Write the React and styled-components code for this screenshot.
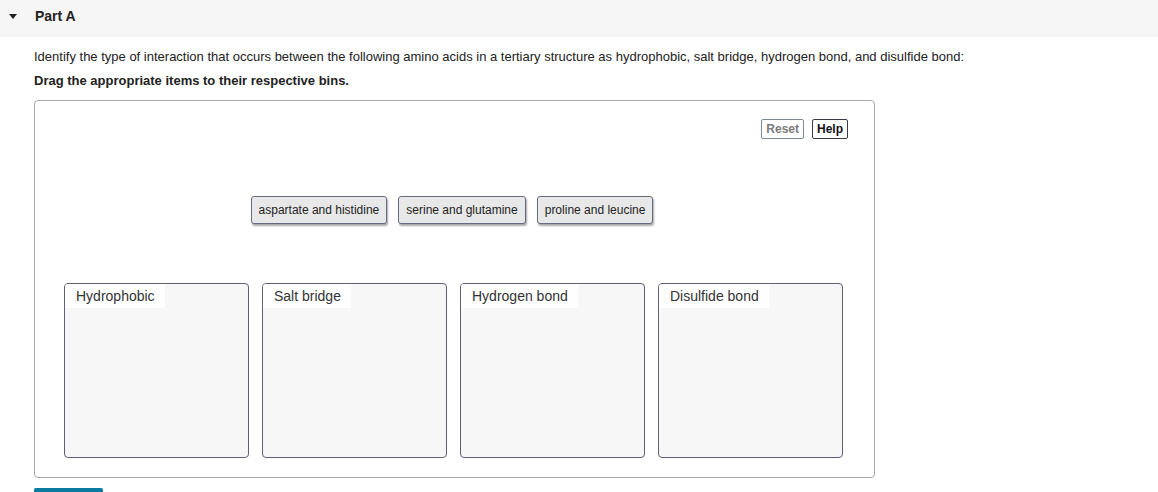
import React from "react";
import styled, { createGlobalStyle } from "styled-components";

const Global = createGlobalStyle`
  body {
    margin: 0;
    background: #fff;
    font-family: "Liberation Sans", Arial, sans-serif;
    color: #222;
  }
`;

const Header = styled.div`
  height: 37px;
  background: #f6f6f6;
  display: flex;
  align-items: center;
  padding-left: 9px;
  gap: 18px;
`;
const Caret = styled.div`
  width: 0;
  height: 0;
  border-left: 4.5px solid transparent;
  border-right: 4.5px solid transparent;
  border-top: 5px solid #222;
  margin-top: -4px;
`;
const PartTitle = styled.div`
  font-size: 14px;
  font-weight: 700;
  color: #222;
  margin-top: -6px;
`;
const Body = styled.div`
  padding: 12px 34px 0;
`;
const Question = styled.p`
  margin: 0;
  font-size: 13px;
  line-height: 16px;
  color: #222;
`;
const Instruction = styled.p`
  margin: 8px 0 0;
  font-size: 13px;
  line-height: 16px;
  font-weight: 700;
  color: #222;
`;
const Board = styled.div`
  margin-top: 11px;
  width: 841px;
  height: 378px;
  box-sizing: border-box;
  border: 1px solid #a9a9a9;
  border-radius: 4px;
  padding: 18px 26px 0 29px;
  display: flex;
  flex-direction: column;
`;
const Tools = styled.div`
  display: flex;
  justify-content: flex-end;
  gap: 8px;
`;
const ToolButton = styled.button`
  font-family: "Liberation Sans", Arial, sans-serif;
  font-size: 12px;
  font-weight: 700;
  height: 20px;
  padding: 0 4px;
  background: #fff;
  border: 1px solid ${(p) => (p.$muted ? "#7d8a90" : "#3a3a4a")};
  border-radius: 2px;
  color: ${(p) => (p.$muted ? "#7b7b7b" : "#111")};
`;
const Tiles = styled.div`
  display: flex;
  justify-content: center;
  gap: 11px;
  margin-top: 57px;
  padding-right: 8px;
`;
const Tile = styled.div`
  height: 28px;
  box-sizing: border-box;
  padding: 0 7px;
  display: flex;
  align-items: center;
  font-size: 12px;
  color: #222;
  background: #e8e8e8;
  border: 1px solid #666a80;
  border-radius: 3px;
  box-shadow: 1px 2px 2px rgba(0, 0, 0, 0.35);
`;
const Bins = styled.div`
  display: flex;
  gap: 13px;
  margin-top: 59px;
`;
const Bin = styled.div`
  width: 185px;
  height: 175px;
  box-sizing: border-box;
  border: 1px solid #5f5f78;
  border-radius: 4px;
  background: #f7f7f7;
`;
const BinLabel = styled.div`
  display: inline-block;
  background: #fff;
  padding: 5px 10px 4px 11px;
  font-size: 14px;
  line-height: 15px;
  color: #333;
  border-top-left-radius: 3px;
`;
const ActionBar = styled.div`
  margin-top: 10px;
  width: 69px;
  height: 6px;
  background: #0a7aa0;
  border-radius: 2px 2px 0 0;
`;

const tiles = ["aspartate and histidine", "serine and glutamine", "proline and leucine"];
const bins = ["Hydrophobic", "Salt bridge", "Hydrogen bond", "Disulfide bond"];

export default function App() {
  return (
    <>
      <Global />
      <Header>
        <Caret />
        <PartTitle>Part A</PartTitle>
      </Header>
      <Body>
        <Question>
          Identify the type of interaction that occurs between the following amino acids in a
          tertiary structure as hydrophobic, salt bridge, hydrogen bond, and disulfide bond:
        </Question>
        <Instruction>Drag the appropriate items to their respective bins.</Instruction>
        <Board>
          <Tools>
            <ToolButton $muted>Reset</ToolButton>
            <ToolButton>Help</ToolButton>
          </Tools>
          <Tiles>
            {tiles.map((t) => (
              <Tile key={t}>{t}</Tile>
            ))}
          </Tiles>
          <Bins>
            {bins.map((b) => (
              <Bin key={b}>
                <BinLabel>{b}</BinLabel>
              </Bin>
            ))}
          </Bins>
        </Board>
        <ActionBar />
      </Body>
    </>
  );
}
